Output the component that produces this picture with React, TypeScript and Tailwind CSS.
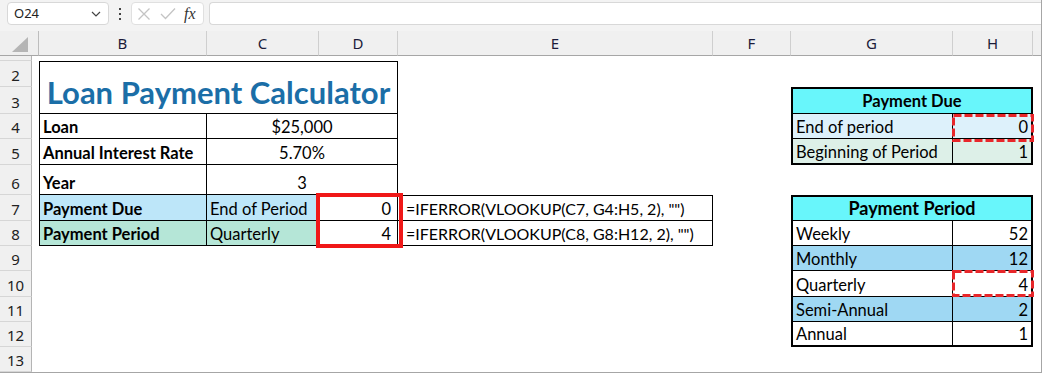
import React from "react";

const ROWS = [
  "row-start-1",
  "row-start-2",
  "row-start-3",
  "row-start-4",
  "row-start-5",
  "row-start-6",
  "row-start-7",
  "row-start-8",
  "row-start-9",
  "row-start-10",
  "row-start-11",
  "row-start-12",
  "row-start-13",
];

const base = "flex items-end pb-[1px] text-[16.5px] leading-[20px] text-black whitespace-nowrap overflow-visible";
const fbase = "flex items-end pb-[1px] text-[16px] leading-[20px] text-black whitespace-nowrap overflow-visible";

function FormulaBar() {
  return (
    <div className="h-[27px] bg-[#f3f3f3] flex items-start pt-[2px] font-['Noto_Sans',sans-serif]">
      <div className="ml-[7px] w-[102px] h-[23px] bg-white border border-[#d8d8d8] rounded-[4px] flex items-center justify-between pl-[6px] pr-[7px]">
        <span className="text-[13px] text-[#222] leading-none">O24</span>
        <svg width="10" height="6" viewBox="0 0 10 6">
          <path d="M1 1 L5 5 L9 1" fill="none" stroke="#444" strokeWidth="1.2" />
        </svg>
      </div>
      <div className="w-[22px] h-[23px] flex flex-col items-center justify-center gap-[3px]">
        <span className="w-[2px] h-[2px] bg-[#444]" />
        <span className="w-[2px] h-[2px] bg-[#444]" />
        <span className="w-[2px] h-[2px] bg-[#444]" />
      </div>
      <div className="w-[73px] h-[23px] bg-white border border-[#e0e0e0] rounded-[4px] flex items-center pl-[5px] gap-[9px]">
        <svg width="14" height="14" viewBox="0 0 14 14">
          <path d="M1.5 1.5 L12.5 12.5 M12.5 1.5 L1.5 12.5" stroke="#c4c4c4" strokeWidth="1.3" />
        </svg>
        <svg width="16" height="13" viewBox="0 0 16 13">
          <path d="M1 7 L5.5 11.5 L15 1.5" fill="none" stroke="#c4c4c4" strokeWidth="1.3" />
        </svg>
        <span className="font-['Liberation_Serif',serif] italic text-[16px] text-[#333] leading-none -ml-[1px]">fx</span>
      </div>
      <div className="ml-[5px] flex-1 h-[23px] bg-white border border-[#d8d8d8] border-r-0 rounded-l-[4px]" />
    </div>
  );
}

function HeaderRow() {
  const cols: [string, string][] = [
    ["B", "w-[168px]"],
    ["C", "w-[112px]"],
    ["D", "w-[79px]"],
    ["E", "w-[315px]"],
    ["F", "w-[78px]"],
    ["G", "w-[162px]"],
    ["H", "w-[80px]"],
  ];
  return (
    <div className="h-[29px] bg-[#f3f3f3] pt-[4px] flex">
      <div className="w-[39px] h-[25px] bg-[#efefef] border-r border-b border-[#bdbdbd] border-b-[#a6a6a6] relative">
        <svg className="absolute left-[12px] top-[6px]" width="17" height="16" viewBox="0 0 17 16">
          <polygon points="16,0 16,15 0,15" fill="#b5b5b5" />
        </svg>
      </div>
      {cols.map(([l, w]) => (
        <div
          key={l}
          className={`${w} h-[25px] bg-[#f0f0f0] border-r border-[#cfcfcf] border-b border-b-[#a6a6a6] flex items-center justify-center text-[15px] text-[#1b1b3a] font-['Noto_Sans',sans-serif]`}
        >
          {l}
        </div>
      ))}
      <div className="flex-1 h-[25px] bg-[#f0f0f0] border-b border-[#a6a6a6]" />
    </div>
  );
}

function Dashed({ w, h }: { w: number; h: number }) {
  return (
    <svg width={w} height={h} className="block">
      <rect
        x="1.5"
        y="1.5"
        width={w - 3}
        height={h - 3}
        fill="none"
        stroke="#e8262a"
        strokeWidth="3"
        strokeDasharray="8 3"
      />
    </svg>
  );
}

function Body() {
  const nums = Array.from({ length: 13 }, (_, i) => i + 1);
  return (
    <div className="grid grid-cols-[32px_7px_168px_112px_79px_315px_78px_162px_80px_8px] grid-rows-[5px_26px_27px_25px_26px_30px_26px_25px_25px_26px_25px_25px_25px] font-['Lato',sans-serif]">
      {nums.map((n) => (
        <div
          key={n}
          className={`col-start-1 ${ROWS[n - 1]} bg-[#f0f0f0] border-r border-[#b4b4b4] border-b border-b-[#d6d6d6] flex items-end justify-center pb-[2px] text-[15px] leading-[18px] text-[#222] font-['Noto_Sans',sans-serif]`}
        >
          {n === 1 ? "" : n}
        </div>
      ))}

      {/* Main table */}
      <div className="col-start-3 col-span-3 row-start-2 row-span-2 border border-black flex items-end justify-center pb-[2px]">
        <span className="text-[31px] leading-[37px] font-bold text-[#1b6ea7]">Loan Payment Calculator</span>
      </div>

      <div className={`col-start-3 row-start-4 border-l border-r border-b border-black pl-[3px] font-bold ${base}`}>Loan</div>
      <div className={`col-start-4 col-span-2 row-start-4 border-r border-b border-black justify-center ${base}`}>$25,000</div>

      <div className={`col-start-3 row-start-5 border-l border-r border-b border-black pl-[3px] font-bold ${base}`}>Annual Interest Rate</div>
      <div className={`col-start-4 col-span-2 row-start-5 border-r border-b border-black justify-center ${base}`}>5.70%</div>

      <div className={`col-start-3 row-start-6 border-l border-r border-b border-black pl-[3px] font-bold ${base}`}>Year</div>
      <div className={`col-start-4 col-span-2 row-start-6 border-r border-b border-black justify-center ${base}`}>3</div>

      <div className={`col-start-3 row-start-7 bg-[#bde6f9] border-l border-r border-b border-black pl-[3px] font-bold ${base}`}>Payment Due</div>
      <div className={`col-start-4 row-start-7 bg-[#bde6f9] border-r border-b border-black pl-[3px] ${base}`}>End of Period</div>
      <div className={`col-start-5 row-start-7 border-r border-b border-black justify-end pr-[6px] ${base}`}>0</div>
      <div className={`col-start-6 row-start-7 border-t border-r border-b border-black pl-[8px] ${fbase}`}>=IFERROR(VLOOKUP(C7, G4:H5, 2), "")</div>

      <div className={`col-start-3 row-start-8 bg-[#b5e6d7] border-l border-r border-b border-black pl-[3px] font-bold ${base}`}>Payment Period</div>
      <div className={`col-start-4 row-start-8 bg-[#b5e6d7] border-r border-b border-black pl-[3px] ${base}`}>Quarterly</div>
      <div className={`col-start-5 row-start-8 border-r border-b border-black justify-end pr-[6px] ${base}`}>4</div>
      <div className={`col-start-6 row-start-8 border-r border-b border-black pl-[8px] ${fbase}`}>=IFERROR(VLOOKUP(C8, G8:H12, 2), "")</div>

      <div className="col-start-5 row-start-7 row-span-2 relative pointer-events-none">
        <div className="absolute -left-[3px] -top-[2px] -right-[5px] -bottom-[2px] border-4 border-[#f01818]" />
      </div>

      {/* Payment Due table */}
      <div className={`col-start-8 col-span-2 row-start-3 bg-[#68f6fb] border-t-2 border-x-2 border-b border-black justify-center font-bold pb-[2px] ${base}`}>Payment Due</div>
      <div className={`col-start-8 row-start-4 bg-[#ddf1fb] border-l-2 border-r border-b border-black pl-[3px] ${base}`}>End of period</div>
      <div className={`col-start-9 row-start-4 bg-[#ddf1fb] border-r-2 border-b border-black justify-end pr-[3px] ${base}`}>0</div>
      <div className={`col-start-8 row-start-5 bg-[#ddf0e8] border-l-2 border-r border-b-2 border-black pl-[3px] ${base}`}>Beginning of Period</div>
      <div className={`col-start-9 row-start-5 bg-[#ddf0e8] border-r-2 border-b-2 border-black justify-end pr-[3px] ${base}`}>1</div>
      <div className="col-start-9 row-start-4 relative pointer-events-none">
        <div className="absolute -left-[1px] top-0">
          <Dashed w={82} h={28} />
        </div>
      </div>

      {/* Payment Period table */}
      <div className="col-start-8 col-span-2 row-start-7 bg-[#68f6fb] border-t-2 border-x-2 border-b border-black flex items-end justify-center pb-[1px]">
        <span className="text-[18px] leading-[22px] font-bold text-black">Payment Period</span>
      </div>
      {(
        [
          ["Weekly", "52", "bg-white", "row-start-8"],
          ["Monthly", "12", "bg-[#9fd8f3]", "row-start-9"],
          ["Quarterly", "4", "bg-white", "row-start-10"],
          ["Semi-Annual", "2", "bg-[#9fd8f3]", "row-start-11"],
          ["Annual", "1", "bg-white", "row-start-12"],
        ] as [string, string, string, string][]
      ).map(([label, val, bg, row], i) => {
        const last = i === 4;
        return (
          <React.Fragment key={label}>
            <div className={`col-start-8 ${row} ${bg} border-l-2 border-r ${last ? "border-b-2" : "border-b"} border-black pl-[3px] ${base}`}>{label}</div>
            <div className={`col-start-9 ${row} ${bg} border-r-2 ${last ? "border-b-2" : "border-b"} border-black justify-end pr-[3px] ${base}`}>{val}</div>
          </React.Fragment>
        );
      })}
      <div className="col-start-9 row-start-10 relative pointer-events-none">
        <div className="absolute -left-[1px] -top-[1px]">
          <Dashed w={82} h={27} />
        </div>
      </div>
    </div>
  );
}

export default function App() {
  return (
    <div className="w-[1042px] h-[373px] overflow-hidden bg-white border-r border-b border-[#a6a6a6]">
      <FormulaBar />
      <HeaderRow />
      <Body />
    </div>
  );
}
